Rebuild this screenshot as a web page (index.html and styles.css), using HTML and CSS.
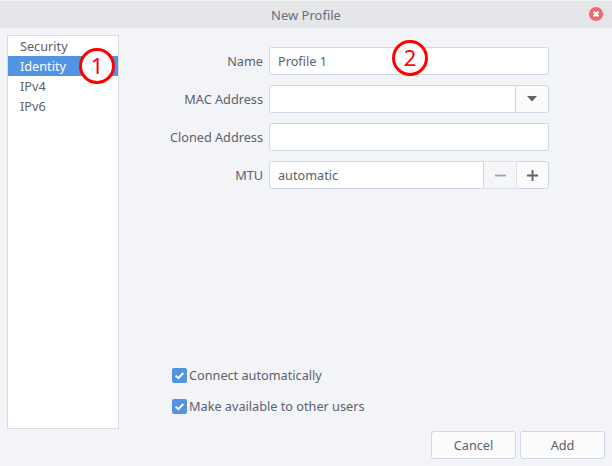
FILE: index.html
```html
<!DOCTYPE html>
<html lang="en">
<head>
<meta charset="utf-8">
<title>New Profile</title>
<link rel="stylesheet" href="styles.css">
</head>
<body>
<div class="window">
  <header class="titlebar">
    <span class="title">New Profile</span>
    <span class="close">
      <svg width="14" height="14" viewBox="0 0 14 14"><circle cx="7" cy="7" r="7" fill="#f5666f"/><path d="M4.6 4.6l4.8 4.8M9.4 4.6l-4.8 4.8" stroke="#fff" stroke-width="2.2" fill="none"/></svg>
    </span>
  </header>
  <div class="content">
    <ul class="sidebar">
      <li>Security</li>
      <li class="selected">Identity</li>
      <li>IPv4</li>
      <li>IPv6</li>
    </ul>
    <div class="main">
      <div class="form">
        <label class="lbl">Name</label>
        <div class="field">Profile 1</div>
        <label class="lbl">MAC Address</label>
        <div class="group">
          <div class="field grow joined"></div>
          <div class="btn-drop"><svg width="10" height="6" viewBox="0 0 10 6"><path d="M0 0h10L5 5.5z" fill="#5c616c"/></svg></div>
        </div>
        <label class="lbl">Cloned Address</label>
        <div class="field"></div>
        <label class="lbl">MTU</label>
        <div class="group">
          <div class="field grow joined">automatic</div>
          <div class="step minus"><svg width="11" height="11" viewBox="0 0 11 11"><path d="M0 5.5h11" stroke="#a2a5ac" stroke-width="1.8"/></svg></div>
          <div class="step plus"><svg width="11" height="11" viewBox="0 0 11 11"><path d="M0 5.5h11M5.5 0v11" stroke="#5c616c" stroke-width="1.8"/></svg></div>
        </div>
      </div>
      <div class="checks">
        <div class="check"><span class="box"><svg width="15" height="15" viewBox="0 0 15 15"><path d="M3.6 7.6l2.7 2.6 5-5.2" stroke="#fff" stroke-width="2" fill="none"/></svg></span>Connect automatically</div>
        <div class="check"><span class="box"><svg width="15" height="15" viewBox="0 0 15 15"><path d="M3.6 7.6l2.7 2.6 5-5.2" stroke="#fff" stroke-width="2" fill="none"/></svg></span>Make available to other users</div>
      </div>
    </div>
  </div>
  <footer class="actions">
    <button class="action">Cancel</button>
    <button class="action">Add</button>
  </footer>
  <span class="marker marker-one">1</span>
  <span class="marker marker-two">2</span>
</div>
</body>
</html>
```
FILE: styles.css
```css
* { box-sizing: border-box; }
html, body { margin: 0; padding: 0; }
body {
  width: 612px;
  height: 466px;
  overflow: hidden;
  background: #f3f4f7;
  font-family: "Noto Sans", "DejaVu Sans", sans-serif;
  font-size: 12.7px;
  color: #5c616c;
}
.window {
  position: relative;
  width: 612px;
  height: 466px;
  display: flex;
  flex-direction: column;
}
.titlebar {
  height: 28px;
  flex: none;
  display: flex;
  align-items: center;
  justify-content: center;
  background: #e4e6ea;
  border-top: 1px solid #eff0f2;
  position: relative;
}
.title { color: #6a6e78; font-size: 13px; }
.close {
  position: absolute;
  right: 9px;
  top: 6px;
  width: 14px;
  height: 14px;
  display: flex;
}
.content {
  flex: none;
  height: 401px;
  padding: 7px 7px 0 7px;
  display: flex;
}
.sidebar {
  width: 112px;
  height: 394px;
  margin: 0;
  padding: 0;
  list-style: none;
  background: #fff;
  border: 1px solid #dbdde1;
}
.sidebar li {
  height: 20px;
  line-height: 20px;
  padding-left: 12px;
}
.sidebar .selected {
  background: #5294e2;
  color: #fff;
}
.main {
  flex: 1;
  display: flex;
  flex-direction: column;
  padding: 12px 56px 0 0;
  height: 394px;
}
.form {
  display: grid;
  grid-template-columns: 144px 280px;
  column-gap: 6px;
  row-gap: 10px;
}
.lbl {
  height: 28px;
  line-height: 29px;
  text-align: right;
}
.field {
  height: 28px;
  line-height: 27px;
  padding-left: 8px;
  background: #fff;
  border: 1px solid #cfd6e6;
  border-radius: 3px;
}
.group { display: flex; height: 28px; }
.grow { flex: 1; }
.joined { border-radius: 3px 0 0 3px; }
.btn-drop {
  width: 33px;
  display: flex;
  align-items: center;
  justify-content: center;
  background: #fbfbfc;
  border: 1px solid #cfd6e6;
  border-left: none;
  border-radius: 0 3px 3px 0;
}
.step {
  width: 33px;
  display: flex;
  align-items: center;
  justify-content: center;
  border: 1px solid #dde0ea;
  border-left: none;
}
.minus { background: #f5f6f8; }
.plus {
  width: 32px;
  background: #fbfbfc;
  border-color: #cfd6e6;
  border-radius: 0 3px 3px 0;
}
.checks {
  margin-top: auto;
  margin-left: 53px;
  padding-bottom: 14px;
  display: flex;
  flex-direction: column;
  gap: 13px;
}
.check {
  height: 18px;
  display: flex;
  align-items: center;
  gap: 2px;
}
.box {
  width: 15px;
  height: 15px;
  flex: none;
  background: #5294e2;
  border-radius: 2px;
  display: flex;
}
.actions {
  flex: none;
  display: flex;
  justify-content: flex-end;
  gap: 4px;
  padding: 2px 7px 0 0;
}
.action {
  width: 85px;
  height: 28px;
  padding: 0;
  font: inherit;
  color: inherit;
  background: #fbfbfc;
  border: 1px solid #cfd6e6;
  border-radius: 3px;
}
.marker {
  position: absolute;
  width: 36px;
  height: 36px;
  border: 3px solid #f00;
  border-radius: 50%;
  background: #fff;
  color: #f00;
  font-size: 22px;
  line-height: 29px;
  text-align: center;
}
.marker-one { left: 79px; top: 48px; }
.marker-two { left: 392px; top: 40px; }
```
